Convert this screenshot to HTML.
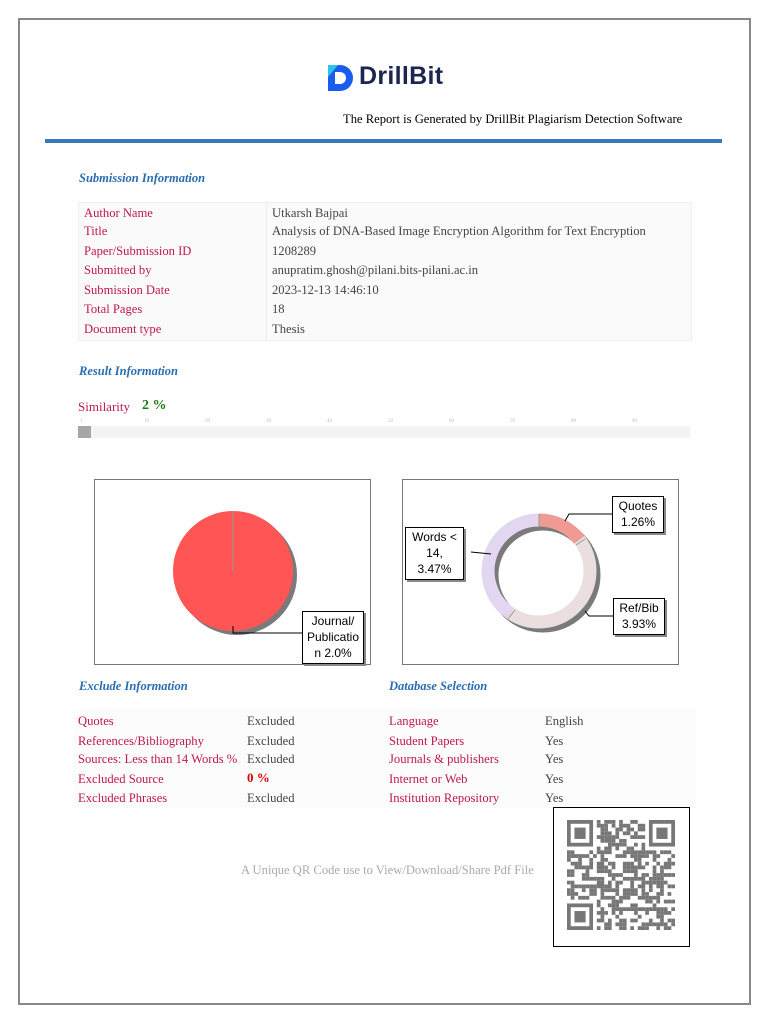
<!DOCTYPE html>
<html><head><meta charset="utf-8"><style>
body{margin:0;width:768px;height:1024px;background:#fff;position:relative;font-family:"Liberation Serif",serif;overflow:hidden}
.a{position:absolute;white-space:nowrap}
.frame{position:absolute;left:18px;top:18px;width:729px;height:983px;border:2px solid #888}
.h{color:#2a6db0;font-style:italic;font-weight:bold;font-size:12.5px}
.l{color:#c0174f;font-size:12.6px}
.v{color:#444;font-size:12.6px}
.box{position:absolute;border:1px solid #777;background:#fff}
.lab{position:absolute;border:1px solid #000;background:#fff;font-family:"Liberation Sans",sans-serif;font-size:12px;text-align:center;line-height:16px;box-shadow:2px 2px 0 #888}
</style></head><body>
<div class="frame"></div>
<svg class="a" style="left:326px;top:63px" width="30" height="30" viewBox="0 0 30 30">
<path d="M2 2h12a13 13 0 0 1 0 26H2z" fill="#1a5cf0"/>
<path d="M9 9h5a6 6 0 0 1 0 12H9z" fill="#fff"/>
<path d="M2 2h10L2 14z" fill="#2ec4e8"/>
</svg>
<div class="a" style="left:359px;top:62px;font-family:'Liberation Sans',sans-serif;font-size:25px;font-weight:bold;color:#1c2550;letter-spacing:0.3px">DrillBit</div>
<div class="a" style="left:343px;top:112px;font-size:12.6px;color:#000">The Report is Generated by DrillBit Plagiarism Detection Software</div>
<div class="a" style="left:45px;top:139px;width:677px;height:4px;background:#3b78b8"></div>

<div class="a h" style="left:79px;top:171px">Submission Information</div>
<div class="a" style="left:78px;top:202px;width:612px;height:137px;background:#fafafa;border:1px solid #f0f0f0"></div>
<div class="a" style="left:266px;top:202px;width:1px;height:138px;background:#eee"></div>
<div class="a l" style="left:84px;top:206px">Author Name</div><div class="a v" style="left:272px;top:206px">Utkarsh Bajpai</div>
<div class="a l" style="left:84px;top:224px">Title</div><div class="a v" style="left:272px;top:224px">Analysis of DNA-Based Image Encryption Algorithm for Text Encryption</div>
<div class="a l" style="left:84px;top:244px">Paper/Submission ID</div><div class="a v" style="left:272px;top:244px">1208289</div>
<div class="a l" style="left:84px;top:263px">Submitted by</div><div class="a v" style="left:272px;top:263px">anupratim.ghosh@pilani.bits-pilani.ac.in</div>
<div class="a l" style="left:84px;top:283px">Submission Date</div><div class="a v" style="left:272px;top:283px">2023-12-13 14:46:10</div>
<div class="a l" style="left:84px;top:302px">Total Pages</div><div class="a v" style="left:272px;top:302px">18</div>
<div class="a l" style="left:84px;top:322px">Document type</div><div class="a v" style="left:272px;top:322px">Thesis</div>

<div class="a h" style="left:79px;top:364px">Result Information</div>
<div class="a l" style="left:78px;top:399px;font-size:13px">Similarity</div>
<div class="a" style="left:142px;top:398px;color:#1a7a1a;font-weight:bold;font-size:14px">2 %</div>
<div class="a" style="left:78px;top:419px;width:612px;font-size:5px;color:#bbb">
<span class="a" style="left:2px">1</span><span class="a" style="left:66px">10</span><span class="a" style="left:127px">20</span><span class="a" style="left:188px">30</span><span class="a" style="left:249px">40</span><span class="a" style="left:310px">50</span><span class="a" style="left:371px">60</span><span class="a" style="left:432px">70</span><span class="a" style="left:493px">80</span><span class="a" style="left:554px">90</span></div>
<div class="a" style="left:78px;top:426px;width:612px;height:12px;background:#f4f2f4"></div>
<div class="a" style="left:78px;top:426px;width:13px;height:12px;background:#a8a4a8"></div>

<div class="box" style="left:94px;top:479px;width:275px;height:184px"></div>
<svg class="a" style="left:94px;top:479px" width="277" height="186">
<circle cx="143" cy="96" r="60" fill="#7a7a7a"/>
<circle cx="139" cy="92" r="60" fill="#ff5555"/>
<line x1="139" y1="32" x2="139" y2="92" stroke="#999" stroke-width="1"/>
<polyline points="139,147 139,154 211,154" fill="none" stroke="#000"/>
</svg>
<div class="lab" style="left:302px;top:611px;width:60px;height:50px;padding-top:1px">Journal/<br>Publicatio<br>n 2.0%</div>

<div class="box" style="left:402px;top:479px;width:275px;height:184px"></div>
<svg class="a" style="left:402px;top:479px" width="277" height="186">
<circle cx="141" cy="96" r="51" fill="none" stroke="#7a7a7a" stroke-width="13"/>
<g transform="translate(137,92)" stroke-width="13" fill="none">
<path d="M0 -51 A51 51 0 0 1 40.3 -31.3" stroke="#f09a94"/>
<path d="M40.3 -31.3 A51 51 0 0 1 -29.3 41.7" stroke="#eadede"/>
<path d="M-29.3 41.7 A51 51 0 0 1 0 -51" stroke="#e2d6f0"/>
</g>
<g stroke="#999" stroke-width="1">
<line x1="137" y1="35" x2="137" y2="47"/><line x1="183" y1="60" x2="174" y2="66"/><line x1="106" y1="140" x2="113" y2="131"/></g>
<polyline points="163,42 167,35 210,35" fill="none" stroke="#000"/>
<polyline points="69,73 89,75" fill="none" stroke="#000"/>
<polyline points="183,132 187,137 212,137" fill="none" stroke="#000"/>
</svg>
<div class="lab" style="left:612px;top:496px;width:50px;height:34px;padding-top:1px">Quotes<br>1.26%</div>
<div class="lab" style="left:405px;top:527px;width:57px;height:50px;padding-top:1px">Words &lt;<br>14,<br>3.47%</div>
<div class="lab" style="left:613px;top:598px;width:50px;height:34px;padding-top:1px">Ref/Bib<br>3.93%</div>

<div class="a h" style="left:79px;top:679px">Exclude Information</div>
<div class="a h" style="left:389px;top:679px">Database Selection</div>
<div class="a" style="left:74px;top:709px;width:622px;height:99px;background:#fcfcfc"></div>
<div class="a l" style="left:78px;top:714px">Quotes</div><div class="a v" style="left:247px;top:714px">Excluded</div>
<div class="a l" style="left:78px;top:734px">References/Bibliography</div><div class="a v" style="left:247px;top:734px">Excluded</div>
<div class="a l" style="left:78px;top:752px">Sources: Less than 14 Words %</div><div class="a v" style="left:247px;top:752px">Excluded</div>
<div class="a l" style="left:78px;top:772px">Excluded Source</div><div class="a" style="left:247px;top:770px;color:#d00;font-weight:bold;font-size:13px">0 %</div>
<div class="a l" style="left:78px;top:791px">Excluded Phrases</div><div class="a v" style="left:247px;top:791px">Excluded</div>
<div class="a l" style="left:389px;top:714px">Language</div><div class="a v" style="left:545px;top:714px">English</div>
<div class="a l" style="left:389px;top:734px">Student Papers</div><div class="a v" style="left:545px;top:734px">Yes</div>
<div class="a l" style="left:389px;top:752px">Journals &amp; publishers</div><div class="a v" style="left:545px;top:752px">Yes</div>
<div class="a l" style="left:389px;top:772px">Internet or Web</div><div class="a v" style="left:545px;top:772px">Yes</div>
<div class="a l" style="left:389px;top:791px">Institution Repository</div><div class="a v" style="left:545px;top:791px">Yes</div>

<div class="a" style="left:241px;top:863px;font-size:12.6px;color:#aaa">A Unique QR Code use to View/Download/Share Pdf File</div>
<div class="a" style="left:553px;top:807px;width:135px;height:138px;border:1px solid #000;background:#fff"></div>
<svg id="qr" class="a" style="left:567px;top:820px" width="108" height="110" viewBox="0 0 29 29" preserveAspectRatio="none"></svg>
<script>
(function(){var s=document.getElementById('qr'),h='',seed=7;
function r(){seed=(seed*9301+49297)%233280;return seed/233280;}
function f(x,y){return (x<8&&y<8)||(x>20&&y<8)||(x<8&&y>20);}
for(var y=0;y<29;y++)for(var x=0;x<29;x++){if(f(x,y))continue;if(r()<0.5)h+='<rect x="'+x+'" y="'+y+'" width="1" height="1"/>';}
[[0,0],[22,0],[0,22]].forEach(function(p){h+='<rect x="'+(p[0]+0.5)+'" y="'+(p[1]+0.5)+'" width="6" height="6" fill="none" stroke="#777" stroke-width="1"/><rect x="'+(p[0]+2)+'" y="'+(p[1]+2)+'" width="3" height="3"/>';});
s.innerHTML='<g fill="#777">'+h+'</g>';})();
</script>
</body></html>
